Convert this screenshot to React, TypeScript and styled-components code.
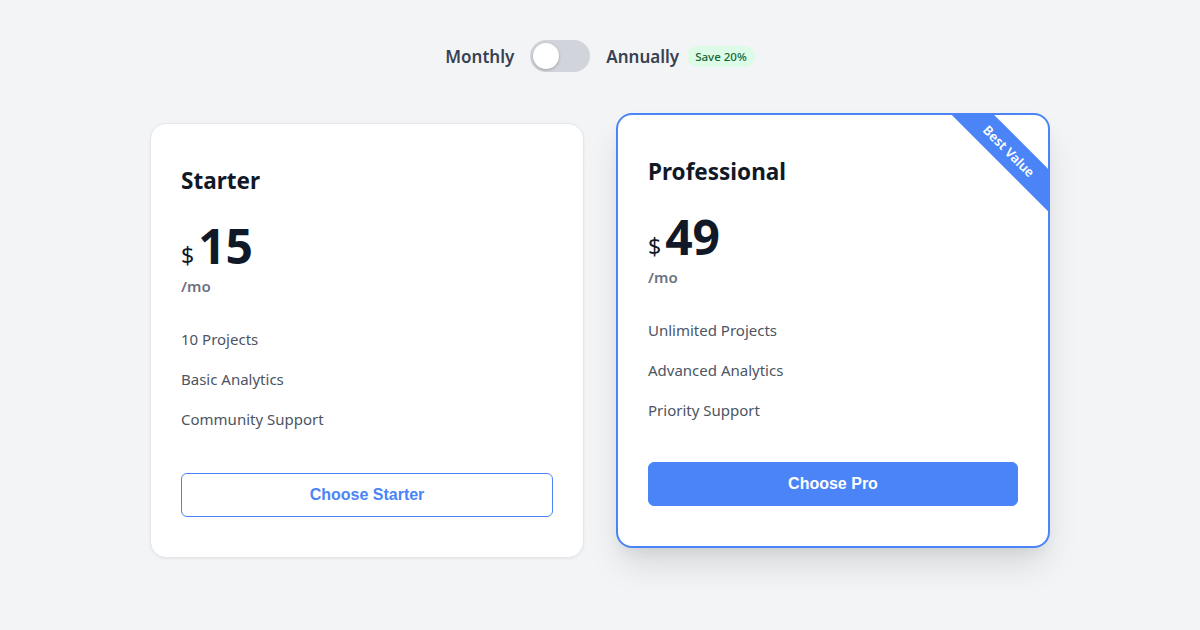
import React, { useState } from "react";
import styled, { createGlobalStyle } from "styled-components";

const GlobalStyle = createGlobalStyle`
  * { box-sizing: border-box; }
  body {
    margin: 0;
    background: #f3f4f6;
    font-family: "Noto Sans", "Open Sans", sans-serif;
    color: #111827;
  }
`;

const plans = [
  {
    name: "Starter",
    price: 15,
    features: ["10 Projects", "Basic Analytics", "Community Support"],
    cta: "Choose Starter",
    featured: false,
  },
  {
    name: "Professional",
    price: 49,
    features: ["Unlimited Projects", "Advanced Analytics", "Priority Support"],
    cta: "Choose Pro",
    featured: true,
  },
];

export default function App() {
  const [annual, setAnnual] = useState(false);
  return (
    <>
      <GlobalStyle />
      <Page>
        <ToggleRow>
          <ToggleLabel>Monthly</ToggleLabel>
          <Switch $on={annual} onClick={() => setAnnual(!annual)}>
            <Knob $on={annual} />
          </Switch>
          <ToggleLabel>Annually</ToggleLabel>
          <SaveBadge>Save 20%</SaveBadge>
        </ToggleRow>

        <Cards>
          {plans.map((p) => (
            <Card key={p.name} $featured={p.featured}>
              {p.featured && <Ribbon>Best Value</Ribbon>}
              <PlanName>{p.name}</PlanName>
              <Price>
                <Currency>$</Currency>
                <Amount>{p.price}</Amount>
              </Price>
              <Period>/mo</Period>
              <Features>
                {p.features.map((f) => (
                  <Feature key={f}>{f}</Feature>
                ))}
              </Features>
              <ChooseButton $primary={p.featured}>{p.cta}</ChooseButton>
            </Card>
          ))}
        </Cards>
      </Page>
    </>
  );
}

const Page = styled.div`
  padding: 40px 20px;
  display: flex;
  flex-direction: column;
  align-items: center;
`;

const ToggleRow = styled.div`
  display: flex;
  align-items: center;
  gap: 16px;
  margin-bottom: 51px;
`;

const ToggleLabel = styled.span`
  font-size: 17px;
  font-weight: 600;
  color: #374151;
`;

const Switch = styled.button<{ $on: boolean }>`
  position: relative;
  width: 60px;
  height: 32px;
  border: none;
  border-radius: 16px;
  padding: 0;
  cursor: pointer;
  background: ${(p) => (p.$on ? "#4a84f7" : "#d1d5db")};
`;

const Knob = styled.span<{ $on: boolean }>`
  position: absolute;
  top: 3px;
  left: ${(p) => (p.$on ? "31px" : "3px")};
  width: 26px;
  height: 26px;
  border-radius: 50%;
  background: #fff;
  box-shadow: 0 1px 3px rgba(0, 0, 0, 0.25);
`;

const SaveBadge = styled.span`
  margin-left: -8px;
  background: #dcfce7;
  color: #166534;
  font-size: 11.5px;
  font-weight: 500;
  padding: 3px 8px;
  border-radius: 12px;
`;

const Cards = styled.div`
  display: grid;
  grid-template-columns: 1fr 1fr;
  gap: 32px;
  width: 900px;
`;

const Card = styled.div<{ $featured: boolean }>`
  position: relative;
  overflow: hidden;
  display: flex;
  flex-direction: column;
  background: #fff;
  border-radius: 16px;
  padding: 40px 30px;
  border: ${(p) => (p.$featured ? "2px solid #4a84f7" : "1px solid #e5e7eb")};
  box-shadow: ${(p) =>
    p.$featured
      ? "0 20px 35px -5px rgba(0, 0, 0, 0.12), 0 8px 14px -4px rgba(0, 0, 0, 0.06)"
      : "0 1px 3px rgba(0, 0, 0, 0.06)"};
  transform: ${(p) => (p.$featured ? "translateY(-10px)" : "none")};
`;

const Ribbon = styled.div`
  position: absolute;
  top: 21px;
  right: -36px;
  width: 150px;
  height: 30px;
  line-height: 30px;
  background: #4a84f7;
  color: #fff;
  text-align: center;
  font-size: 13px;
  font-weight: 600;
  transform: rotate(45deg);
`;

const PlanName = styled.h3`
  margin: 0 0 20px;
  font-size: 22.5px;
  line-height: 34px;
  font-weight: 700;
  color: #111827;
`;

const Price = styled.div`
  display: flex;
  align-items: baseline;
  gap: 4px;
  line-height: 56px;
  height: 56px;
`;

const Currency = styled.span`
  font-size: 23px;
  color: #111827;
`;

const Amount = styled.span`
  font-size: 48px;
  font-weight: 700;
  color: #111827;
`;

const Period = styled.div`
  margin-top: 2px;
  font-size: 15px;
  font-weight: 600;
  color: #6b7280;
  line-height: 20px;
  margin-bottom: 23px;
`;

const Features = styled.ul`
  list-style: none;
  margin: 0 0 32px;
  padding: 0;
`;

const Feature = styled.li`
  font-size: 15px;
  line-height: 20px;
  padding: 10px 0;
  color: #4b5563;
`;

const ChooseButton = styled.button<{ $primary: boolean }>`
  margin-top: auto;
  width: 100%;
  height: 44px;
  border-radius: 6px;
  font-family: "Liberation Sans", Arial, sans-serif;
  font-size: 16px;
  font-weight: 700;
  cursor: pointer;
  border: 1px solid #4a84f7;
  background: ${(p) => (p.$primary ? "#4a84f7" : "#fff")};
  color: ${(p) => (p.$primary ? "#fff" : "#4a84f7")};
`;
